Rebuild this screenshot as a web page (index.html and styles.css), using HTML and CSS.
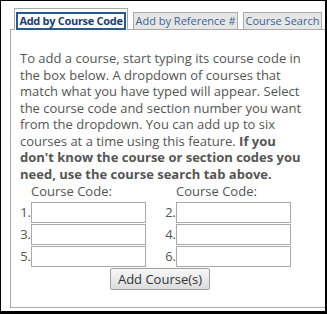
FILE: index.html
```html
<!DOCTYPE html>
<html>

<head>
  <meta charset='utf-8'>
  <title>Add Courses</title>
  <link rel="stylesheet" href="styles.css">
</head>

<body>
  <div class='frame'>
    <div class='tab-box'>
      <ul class='tabs'>
        <li class='tab active'><span>Add by Course Code</span></li>
        <li class='tab ref-tab'>Add by Reference #</li>
        <li class='tab search-tab'>Course Search</li>
      </ul>
      <div class='panel'>
        <p class='intro'>To add a course, start typing its course code in the box below. A dropdown of courses that
          match what you have typed will appear. Select the course code and section number you want from the
          dropdown. You can add up to six courses at a time using this feature. <strong>If you don't know the course
            or section codes you need, use the course search tab above.</strong></p>
        <form id='add-course-form'>
          <div class='course-grid'>
            <span></span>
            <span class='col-head'>Course Code:</span>
            <span></span>
            <span class='col-head'>Course Code:</span>

            <label for='course1'>1.</label>
            <input type='text' id='course1' name='course1'>
            <label for='course2'>2.</label>
            <input type='text' id='course2' name='course2'>

            <label for='course3'>3.</label>
            <input type='text' id='course3' name='course3'>
            <label for='course4'>4.</label>
            <input type='text' id='course4' name='course4'>

            <label for='course5'>5.</label>
            <input type='text' id='course5' name='course5'>
            <label for='course6'>6.</label>
            <input type='text' id='course6' name='course6'>
          </div>
          <div class='actions'>
            <button type='submit'>Add Course(s)</button>
          </div>
        </form>
      </div>
    </div>
  </div>
</body>

</html>
```

FILE: styles.css
```css
* {
  box-sizing: border-box;
}

body {
  margin: 0;
  font-family: 'Open Sans', sans-serif;
  color: #555;
}

.frame {
  width: 327px;
  height: 314px;
  border-style: solid;
  border-color: #000;
  border-width: 1px 2px 3px 1px;
  background-color: #fff;
  overflow: hidden;
}

.tab-box {
  margin-left: 9px;
  padding-top: 7px;
}

.tabs {
  display: flex;
  align-items: flex-end;
  gap: 5px;
  list-style: none;
  margin: 0 0 0 4px;
  padding: 0;
}

.tab {
  height: 18px;
  border: 1px solid #aaa;
  background-color: #e6e6e6;
  color: #3c6494;
  font-size: 11px;
  line-height: 16px;
  text-align: center;
  white-space: nowrap;
}

.ref-tab {
  width: 105px;
}

.search-tab {
  width: 79px;
}

.tab.active {
  position: relative;
  z-index: 1;
  width: 114px;
  height: 22px;
  padding: 3px 1px 0;
  border-bottom: none;
  background-color: #fff;
}

.tab.active span {
  display: block;
  height: 18px;
  border: 2px solid #2a5a8c;
  color: #1d3e6e;
  font-weight: bold;
  letter-spacing: -0.3px;
  line-height: 14px;
}

.panel {
  width: 340px;
  height: 279px;
  margin-top: -1px;
  padding-left: 9px;
  border: 1px solid #aaa;
}

.intro {
  width: 282px;
  margin: 20px 0 0;
  font-size: 13px;
  line-height: 16.5px;
}

.course-grid {
  display: grid;
  grid-template-columns: 11px 115px 30px 115px;
  grid-auto-rows: 21px;
  grid-template-rows: 19px;
  row-gap: 1px;
  font-size: 13px;
}

.col-head {
  line-height: 19px;
}

.course-grid label {
  line-height: 21px;
  text-align: right;
}

.course-grid input {
  width: 115px;
  height: 21px;
  margin: 0;
  border: 1px solid #a9a9a9;
  padding: 0 3px;
}

.actions {
  width: 280px;
  text-align: center;
}

button {
  height: 22px;
  padding: 0 7px;
  border: 1px solid #a0a0a0;
  border-radius: 2px;
  background: linear-gradient(#f8f8f8, #dcdcdc);
  color: #333;
  font-family: 'Open Sans', sans-serif;
  font-size: 13px;
  cursor: pointer;
}
```
